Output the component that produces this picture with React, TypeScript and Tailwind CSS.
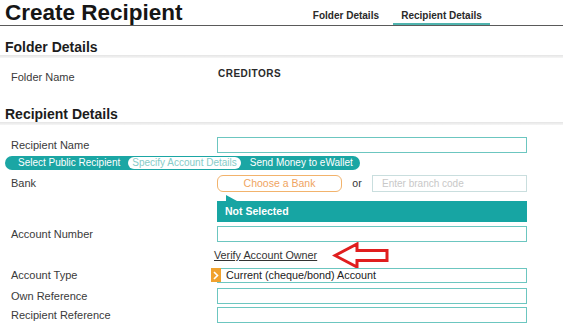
import React from "react"

function Label({ children }: { children: React.ReactNode }) {
  return <div className="w-[217px] shrink-0 pl-[11px] text-[11px] leading-[13px] text-[#3a3a3a]">{children}</div>
}

function Field({ className = "" }: { className?: string }) {
  return <div className={"h-[16px] w-[310px] border-[1.5px] border-[#6cc6c0] bg-white " + className} />
}

function SectionHeading({ title, top }: { title: string; top: string }) {
  return (
    <div>
      <div className={"pl-[5px] text-[14px] font-bold leading-[16px] text-[#1c1c1c] " + top}>{title}</div>
      <div className="h-[3px] bg-gradient-to-b from-[#e4e4e4] to-[#f6f6f6]" />
    </div>
  )
}

export default function App() {
  return (
    <div className="h-[325px] w-[563px] overflow-hidden bg-white font-['Liberation_Sans',Arial,sans-serif]">
      {/* page header with tabs */}
      <div className="flex h-[26px] items-end border-b-[1.5px] border-[#5a5a5a] pl-[5px]">
        <div className="pb-[1px] text-[22.5px] font-bold leading-[22px] text-[#161616]">Create Recipient</div>
        <div className="ml-auto mr-[73px] flex items-end">
          <div className="pb-[4px] pr-[14px] text-[10px] font-bold leading-[11px] text-[#2a2a2a]">Folder Details</div>
          <div className="w-[97px] border-b-2 border-[#4fb3ae] pb-[2px] text-center text-[10px] font-bold leading-[11px] text-[#2a2a2a]">
            Recipient Details
          </div>
        </div>
      </div>

      <div className="h-[31px]">
        <SectionHeading title="Folder Details" top="pt-[13px]" />
      </div>

      <div className="flex h-[43px]">
        <div className="pt-[14px]">
          <Label>Folder Name</Label>
        </div>
        <div className="pl-[1px] pt-[11px] text-[10px] font-bold leading-[12px] tracking-[0.5px] text-[#2a2a2a]">CREDITORS</div>
      </div>

      <div className="h-[23px]">
        <SectionHeading title="Recipient Details" top="pt-[6px]" />
      </div>

      <div className="mt-[14px] flex items-center">
        <Label>Recipient Name</Label>
        <Field />
      </div>

      {/* recipient type switch */}
      <div className="mt-[3px] flex">
        <div className="ml-[5px] flex h-[14px] items-center rounded-full bg-[#1ba6a4] pl-[13px] pr-[7px] text-[10px] leading-[12px] text-white">
          <span>Select Public Recipient</span>
          <span className="ml-[8px] rounded-full bg-white px-[4px] text-[#86cbc7]">Specify Account Details</span>
          <span className="ml-[9px]">Send Money to eWallet</span>
        </div>
      </div>

      <div className="mt-[5px] flex items-center">
        <Label>Bank</Label>
        <div className="flex h-[17px] w-[125px] items-center justify-center rounded-[6px] border-[1.5px] border-[#f2b36c] text-[10.5px] text-[#efa461]">
          Choose a Bank
        </div>
        <div className="w-[30px] text-center text-[10.5px] text-[#333]">or</div>
        <div className="flex h-[17px] w-[155px] items-center border border-[#c9dede] pl-[9px] text-[10px] text-[#c8c8c8]">
          Enter branch code
        </div>
      </div>

      <div className="relative ml-[217px] mt-[9px] flex h-[21px] w-[310px] items-center bg-[#17a5a3] pl-[8px] text-[10.5px] font-bold text-white">
        <svg className="absolute left-[9px] top-[-6px]" width="11" height="6" viewBox="0 0 11 6">
          <path d="M0 0 L11 6 L0 6 Z" fill="#17a5a3" />
        </svg>
        Not Selected
      </div>

      <div className="mt-[4px] flex items-center">
        <Label>Account Number</Label>
        <Field />
      </div>

      <div className="flex h-[26px] items-center">
        <div className="ml-[214px] text-[10.8px] text-[#333] underline">Verify Account Owner</div>
        <svg className="ml-[15px]" width="58" height="27" viewBox="0 0 58 27">
          <path d="M3 13.5 L25 2 L25 8.5 L55 8.5 L55 18.5 L25 18.5 L25 25 Z" fill="none" stroke="#e01e1e" strokeWidth="3" strokeLinejoin="miter" />
        </svg>
      </div>

      <div className="flex items-center">
        <Label>Account Type</Label>
        <div className="relative flex h-[15px] w-[310px] items-center border-[1.5px] border-[#6cc6c0] pl-[8px] text-[10.8px] text-[#222]">
          <div className="absolute left-[-7px] top-[-1px] flex h-[14px] w-[10px] items-center justify-center bg-[#f0a22e]">
            <svg width="6" height="9" viewBox="0 0 6 9">
              <path d="M1 1 L4.5 4.5 L1 8" fill="none" stroke="white" strokeWidth="1.6" />
            </svg>
          </div>
          Current (cheque/bond) Account
        </div>
      </div>

      <div className="mt-[5px] flex items-center">
        <Label>Own Reference</Label>
        <Field />
      </div>

      <div className="mt-[3px] flex items-center">
        <Label>Recipient Reference</Label>
        <Field />
      </div>
    </div>
  )
}
